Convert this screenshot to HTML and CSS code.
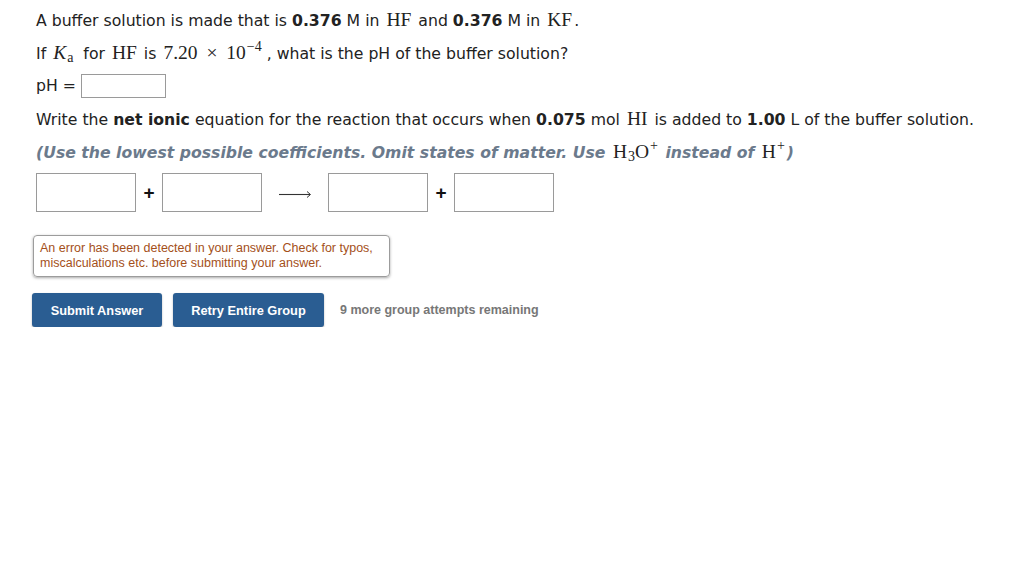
FILE: index.html
```html
<!DOCTYPE html>
<html lang="en">
<head>
<meta charset="utf-8">
<title>Buffer solution</title>
<link rel="stylesheet" href="styles.css">
</head>
<body>
<main class="question">
  <p class="line">A buffer solution is made that is <b>0.376</b> M in <span class="m">HF</span> and <b>0.376</b> M in <span class="m">KF</span>.</p>
  <p class="line">If <span class="m m-wide"><i>K</i><sub>a</sub></span> for <span class="m">HF</span> is <span class="m m-wide">7.20 <span class="times">×</span> 10<sup>−4</sup></span>, what is the pH of the buffer solution?</p>
  <p class="line ph">pH = <span class="field field-ph"></span></p>
  <p class="line">Write the <b>net ionic</b> equation for the reaction that occurs when <b>0.075</b> mol <span class="m">HI</span> is added to <b>1.00</b> L of the buffer solution.</p>
  <p class="line hint">(Use the lowest possible coefficients. Omit states of matter. Use <span class="m">H<sub>3</sub>O<sup>+</sup></span> instead of <span class="m">H<sup>+</sup></span>)</p>

  <div class="equation">
    <span class="field field-eq"></span>
    <span class="op">+</span>
    <span class="field field-eq"></span>
    <svg class="arrow" width="66" height="12" viewBox="0 0 66 12" aria-hidden="true">
      <path d="M17 6.5H48" stroke="#333" stroke-width="1.1" fill="none"/>
      <path d="M45 3.5L48.5 6.5L45 9.5" stroke="#333" stroke-width="1" fill="none"/>
    </svg>
    <span class="field field-eq"></span>
    <span class="op">+</span>
    <span class="field field-eq"></span>
  </div>

  <div class="error">An error has been detected in your answer. Check for typos, miscalculations etc. before submitting your answer.</div>

  <div class="actions">
    <button class="btn btn-submit">Submit Answer</button>
    <button class="btn btn-retry">Retry Entire Group</button>
    <span class="attempts">9 more group attempts remaining</span>
  </div>
</main>
</body>
</html>
```

FILE: styles.css
```css
html, body {
  margin: 0;
  background: #fff;
}

.question {
  padding: 9px 0 0 36px;
  font-family: Verdana, "DejaVu Sans", sans-serif;
  font-size: 15.7px;
  color: #222;
}

.line {
  margin: 0;
  height: 33px;
  line-height: 22px;
  white-space: nowrap;
}

.m {
  font-family: "Liberation Serif", "DejaVu Serif", serif;
  font-size: 19.5px;
  margin: 0 2px;
}

.m-wide {
  margin-right: 5px;
}

.m sub, .m sup {
  font-size: 14px;
  line-height: 0;
  margin-left: 1px;
}

.m sub {
  vertical-align: -3px;
}

.m sup {
  vertical-align: 8px;
}

.times {
  margin: 0 4px;
}

.ph {
  display: flex;
  align-items: flex-start;
  gap: 5px;
}

.field {
  display: inline-block;
  box-sizing: border-box;
  border: 1px solid #9a9a9a;
  background: #fff;
}

.field-ph {
  width: 85px;
  height: 24px;
  margin-top: -1px;
}

.hint {
  color: #6b7a8c;
  font-style: italic;
  font-weight: bold;
}

.hint .m {
  font-style: normal;
  font-weight: normal;
  color: #222;
}

.equation {
  display: flex;
  align-items: center;
  margin-top: -1px;
  height: 39px;
}

.field-eq {
  width: 100px;
  height: 39px;
}

.op {
  width: 26px;
  text-align: center;
  font-family: "Liberation Sans", Arial, sans-serif;
  font-weight: bold;
  font-size: 19px;
  color: #111;
}

.arrow {
  display: block;
  margin-top: 3px;
}

.error {
  box-sizing: border-box;
  width: 357px;
  margin: 23px 0 0 -3px;
  padding: 5px 6px;
  border: 1px solid #9c9c9c;
  border-radius: 4px;
  box-shadow: 0 1px 3px rgba(0, 0, 0, 0.35);
  font-family: "Liberation Sans", Arial, sans-serif;
  font-size: 12.5px;
  line-height: 15px;
  color: #a4501a;
}

.actions {
  display: flex;
  align-items: center;
  margin: 16px 0 0 -4px;
  gap: 11px;
}

.btn {
  height: 34px;
  padding: 0;
  border: 0;
  border-radius: 3px;
  background: #2a5d92;
  color: #fff;
  font-family: "Liberation Sans", Arial, sans-serif;
  font-weight: bold;
  font-size: 12.8px;
  white-space: nowrap;
  box-shadow: 0 1px 2px rgba(0, 0, 0, 0.3);
}

.btn-submit {
  width: 130px;
}

.btn-retry {
  width: 151px;
}

.attempts {
  margin-left: 5px;
  font-family: "Liberation Sans", Arial, sans-serif;
  font-weight: bold;
  font-size: 12.5px;
  color: #777;
}
```
